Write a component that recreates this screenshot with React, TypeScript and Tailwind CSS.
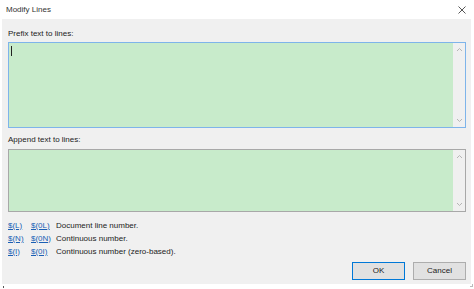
import React from "react";

function Scroll() {
  return (
    <div className="w-[12px] h-full bg-[#f0f0f0] flex flex-col justify-between items-center pt-[4px] pb-[4px]">
      <svg width="7" height="5" viewBox="0 0 7 5"><path d="M1 4 L3.5 1.5 L6 4" fill="none" stroke="#b5b5b5" strokeWidth="1" /></svg>
      <svg width="7" height="5" viewBox="0 0 7 5"><path d="M1 1 L3.5 3.5 L6 1" fill="none" stroke="#b5b5b5" strokeWidth="1" /></svg>
    </div>
  );
}

function Row({ a, b, d }: { a: string; b: string; d: string }) {
  return (
    <div className="flex items-center h-[13px]">
      <span className="w-[23px] text-[#1a5fb4] underline">{a}</span>
      <span className="w-[25px] text-[#1a5fb4] underline">{b}</span>
      <span className="text-[#222]">{d}</span>
    </div>
  );
}

export default function App() {
  return (
    <div className="w-[474px] h-[289px] bg-white flex flex-col text-[8px] text-[#222] relative" style={{ fontFamily: '"Liberation Sans", Arial, sans-serif' }}>
      <div className="h-[19px] flex items-center justify-between pl-[6px] pr-[8px] text-[#333]">
        <span className="text-[8px]">Modify Lines</span>
        <svg width="8" height="8" viewBox="0 0 8 8"><path d="M0.5 0.5 L7.5 7.5 M7.5 0.5 L0.5 7.5" stroke="#444" strokeWidth="0.9" /></svg>
      </div>
      <div className="flex-1 bg-[#f0f0f0] ml-[2px] mr-[3px] mb-[5px] pl-[6px] pr-[5px] flex flex-col">
        <div className="h-[23px] flex items-center pt-[7px]">Prefix text to lines:</div>
        <div className="h-[86px] border border-[#7eb4ea] bg-[#c8ebcb] flex justify-between">
          <div className="w-[1px] h-[10px] bg-[#222] ml-[2px] mt-[3px]"></div>
          <Scroll />
        </div>
        <div className="h-[21px] flex items-center pt-[2px]">Append text to lines:</div>
        <div className="h-[63px] border border-[#a8a8a8] bg-[#c8ebcb] flex justify-end">
          <Scroll />
        </div>
        <div className="mt-[7px] flex flex-col">
          <Row a="$(L)" b="$(0L)" d="Document line number." />
          <Row a="$(N)" b="$(0N)" d="Continuous number." />
          <Row a="$(I)" b="$(0I)" d="Continuous number (zero-based)." />
        </div>
        <div className="flex justify-end gap-[8px] mt-[4px]">
          <button className="w-[53px] h-[18px] border border-[#0078d7] bg-[#e1e1e1] text-[8px] text-[#222]">OK</button>
          <button className="w-[53px] h-[18px] border border-[#adadad] bg-[#e1e1e1] text-[8px] text-[#222]">Cancel</button>
        </div>
      </div>
      <div className="absolute right-[1px] bottom-[2px] w-[3px] h-[3px] border-r border-b border-[#bbb]"></div>
      <div className="absolute left-[3px] bottom-[1px] w-[1px] h-[2px] bg-[#555]"></div>
    </div>
  );
}
